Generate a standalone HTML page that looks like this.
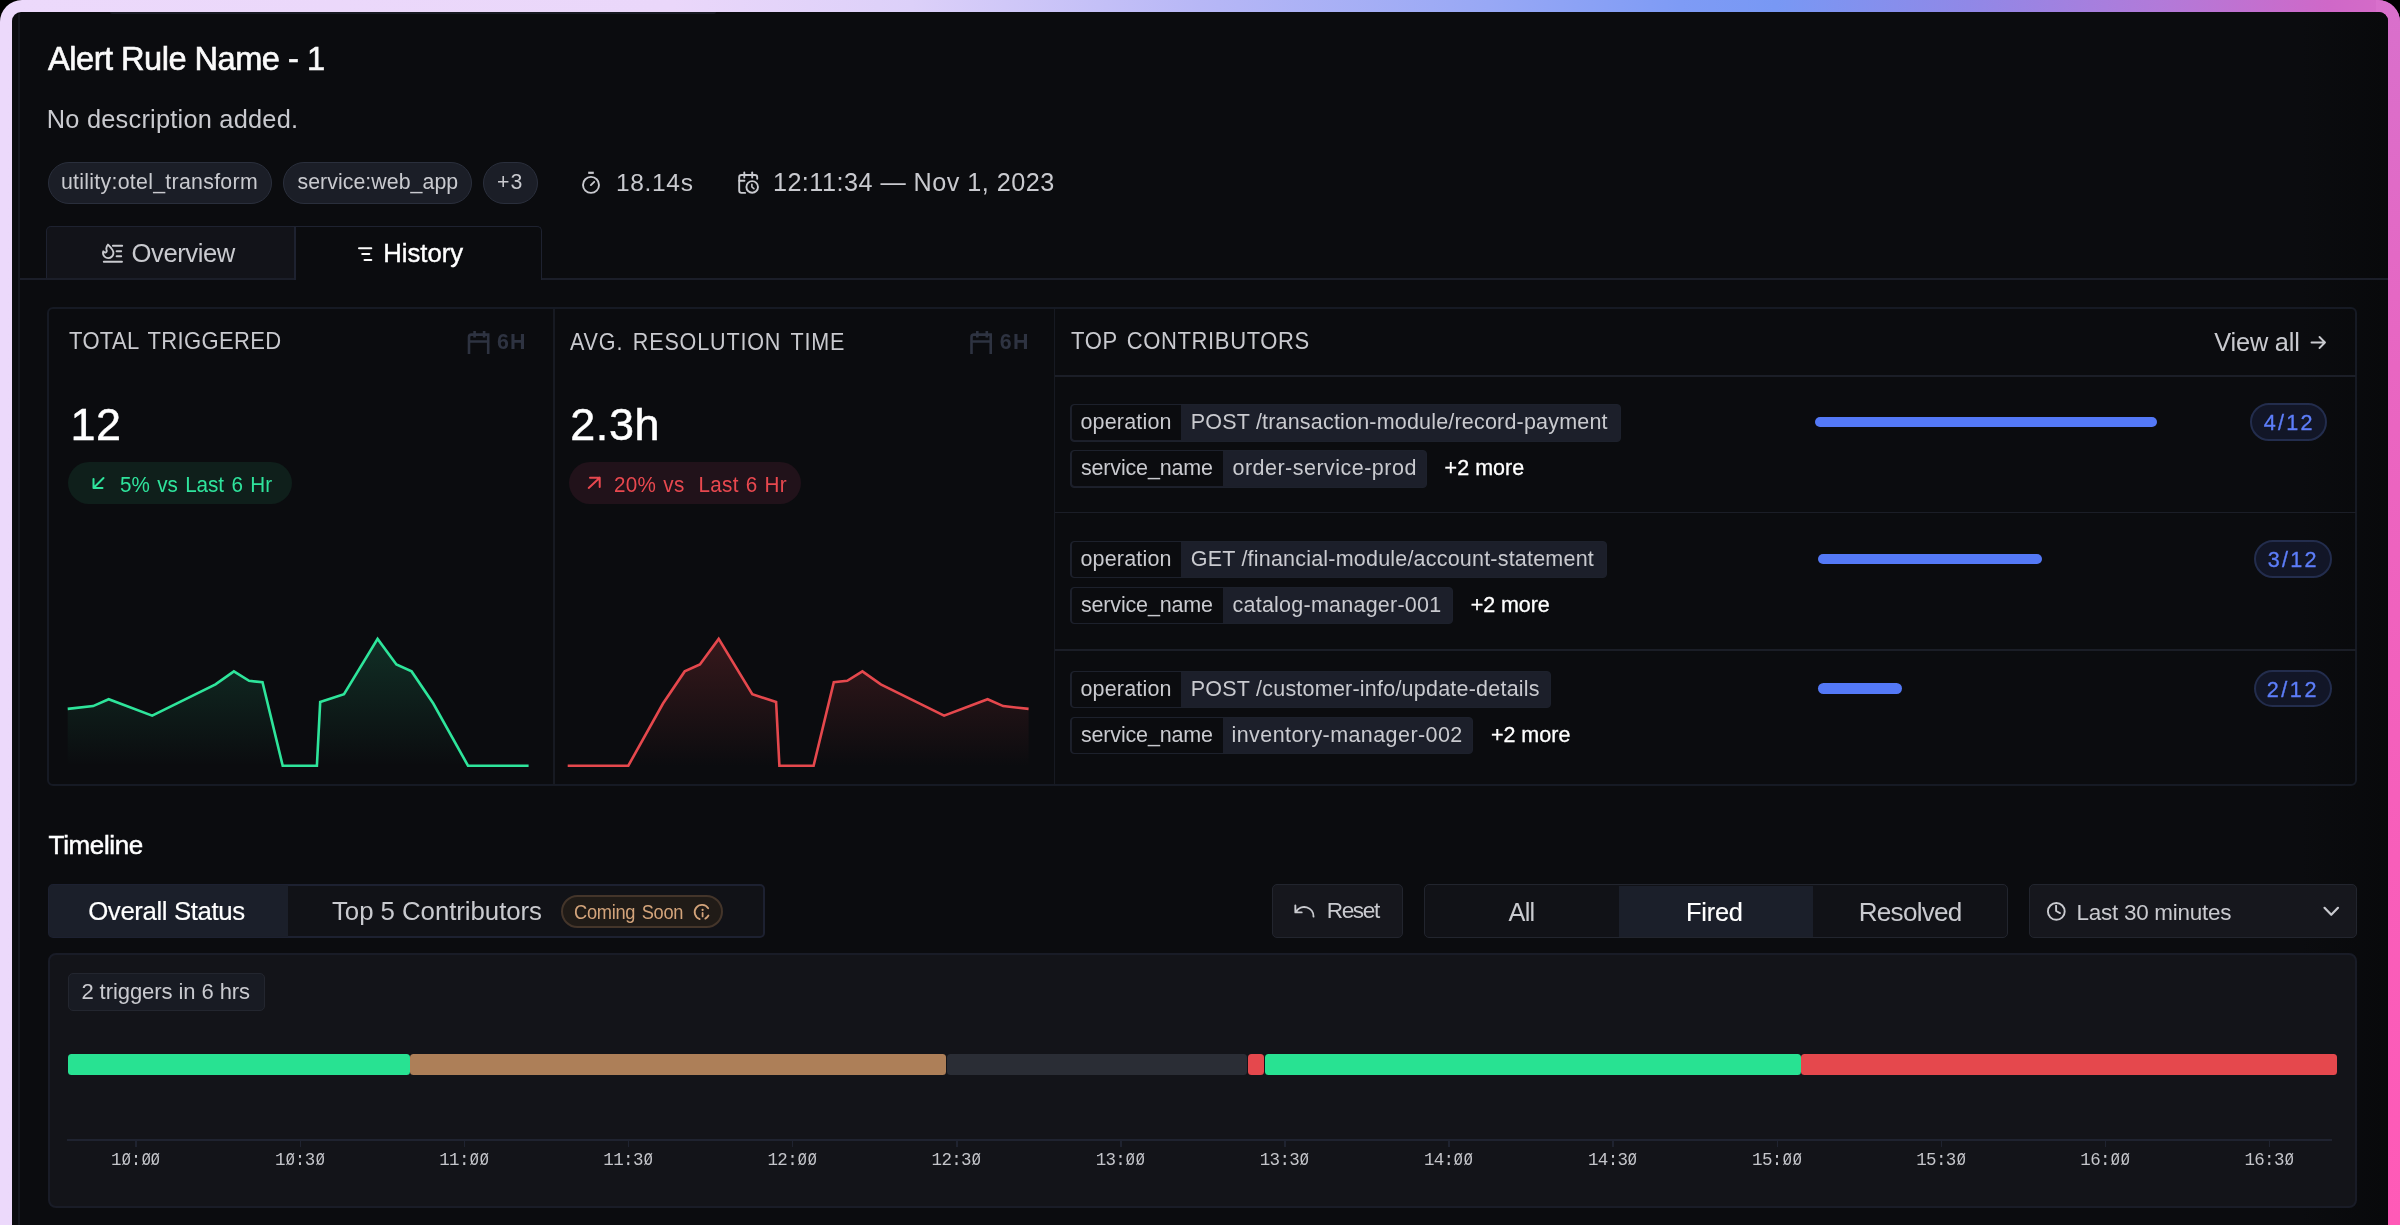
<!DOCTYPE html>
<html><head><meta charset="utf-8"><title>Alert Rule</title>
<style>
*{box-sizing:border-box;margin:0;padding:0}
html,body{width:2400px;height:1225px;overflow:hidden;background:#000}
body{font-family:"Liberation Sans",sans-serif;position:relative}
.t{position:absolute;white-space:pre;line-height:1}

.z{display:inline-block;transform:scaleX(0.86)}
#txt{position:absolute;left:0;top:0;width:2400px;height:1225px;will-change:transform}
.b{position:absolute}
svg{position:absolute;left:0;top:0;overflow:visible}
</style></head>
<body>
<div class="b" style="left:0px;top:0px;width:2400px;height:1260px;border-radius:22px;background:linear-gradient(90deg,#ecd9fb 0%,#ead7fa 28%,#dcd0f9 38%,#b7b7f6 50%,#98a8f5 62%,#7e9bf5 70%,#7898f4 74%,#9088e7 82%,#b27ad9 90%,#cf68c8 97%,#d66cc8 100%)"></div>
<div class="b" style="left:2376px;top:0px;width:24px;height:1225px;border-radius:0 22px 0 0;background:linear-gradient(180deg,#d870cc 0%,#e866c2 30%,#f85eba 70%,#ff5ab7 100%)"></div>
<div class="b" style="left:12px;top:12px;width:2376px;height:1248px;border-radius:9px;background:#0b0c0f"></div>
<div class="b" style="left:2300px;top:12px;width:88px;height:1213px;border-radius:0 9px 0 0;background:linear-gradient(90deg,rgba(11,12,15,0) 0%,rgba(8,9,11,1) 100%)"></div>
<div class="b" style="left:110px;top:12px;width:606px;height:2px;background:#181a22;border-radius:0 0 2px 2px"></div>
<div class="b" style="left:18px;top:14px;width:2px;height:1211px;background:#15171e"></div>
<div class="b" style="left:20px;top:278.3px;width:2368px;height:1.8000000000000114px;background:#1b1e29"></div>
<div class="b" style="left:45.5px;top:225.5px;width:250.5px;height:52.80000000000001px;background:#121319;border:1.5px solid #1e2230;border-bottom:none;border-radius:5px 0 0 0"></div>
<div class="b" style="left:296px;top:225.5px;width:245.5px;height:54.60000000000002px;background:#0b0c0f;border:1.5px solid #1e2230;border-left:none;border-bottom:none;border-radius:0 5px 0 0"></div>
<div class="b" style="left:294px;top:226px;width:2px;height:54px;background:#1e2230"></div>
<div class="b" style="left:47.5px;top:161.5px;width:224.8px;height:42.5px;background:#1b1e27;border:1.5px solid #2a2f3c;border-radius:22px"></div>
<div class="b" style="left:283.2px;top:161.5px;width:188.8px;height:42.5px;background:#1b1e27;border:1.5px solid #2a2f3c;border-radius:22px"></div>
<div class="b" style="left:483px;top:161.5px;width:54.799999999999955px;height:42.5px;background:#1b1e27;border:1.5px solid #2a2f3c;border-radius:22px"></div>
<div class="b" style="left:47.2px;top:307.2px;width:2310.3px;height:478.59999999999997px;border:2px solid #161a24;border-radius:6px"></div>
<div class="b" style="left:553px;top:309px;width:1.5px;height:477px;background:#171a22"></div>
<div class="b" style="left:1053.7px;top:309px;width:1.5px;height:477px;background:#171a22"></div>
<div class="b" style="left:1055px;top:375px;width:1301px;height:1.5px;background:#1b1e27"></div>
<div class="b" style="left:1055px;top:511.5px;width:1301px;height:1.5px;background:#1b1e27"></div>
<div class="b" style="left:1055px;top:649px;width:1301px;height:1.5px;background:#1b1e27"></div>
<div class="b" style="left:68px;top:462.2px;width:224px;height:41.60000000000002px;background:#0f1f1b;border-radius:21px"></div>
<div class="b" style="left:569px;top:462.3px;width:231.70000000000005px;height:41.30000000000001px;background:#21121a;border-radius:21px"></div>
<div class="b" style="left:1070px;top:403.5px;width:550.8px;height:38.30000000000001px;background:#1c1f2a;border:1.5px solid #1d212c;border-radius:4px"></div>
<div class="b" style="left:1071.5px;top:405.0px;width:109.29999999999995px;height:35.30000000000001px;background:#0b0c0f;border-radius:3px 0 0 3px"></div>
<div class="b" style="left:1070px;top:449.5px;width:357px;height:38.0px;background:#1c1f2a;border:1.5px solid #1d212c;border-radius:4px"></div>
<div class="b" style="left:1071.5px;top:451.0px;width:151.29999999999995px;height:35.0px;background:#0b0c0f;border-radius:3px 0 0 3px"></div>
<div class="b" style="left:1070px;top:540.7px;width:536.5px;height:37.69999999999993px;background:#1c1f2a;border:1.5px solid #1d212c;border-radius:4px"></div>
<div class="b" style="left:1071.5px;top:542.2px;width:109.29999999999995px;height:34.69999999999993px;background:#0b0c0f;border-radius:3px 0 0 3px"></div>
<div class="b" style="left:1070px;top:586.6px;width:382.5px;height:37.69999999999993px;background:#1c1f2a;border:1.5px solid #1d212c;border-radius:4px"></div>
<div class="b" style="left:1071.5px;top:588.1px;width:151.29999999999995px;height:34.69999999999993px;background:#0b0c0f;border-radius:3px 0 0 3px"></div>
<div class="b" style="left:1070px;top:670.5px;width:480.70000000000005px;height:37.700000000000045px;background:#1c1f2a;border:1.5px solid #1d212c;border-radius:4px"></div>
<div class="b" style="left:1071.5px;top:672.0px;width:109.29999999999995px;height:34.700000000000045px;background:#0b0c0f;border-radius:3px 0 0 3px"></div>
<div class="b" style="left:1070px;top:716.7px;width:402.5999999999999px;height:37.69999999999993px;background:#1c1f2a;border:1.5px solid #1d212c;border-radius:4px"></div>
<div class="b" style="left:1071.5px;top:718.2px;width:151.29999999999995px;height:34.69999999999993px;background:#0b0c0f;border-radius:3px 0 0 3px"></div>
<div class="b" style="left:1815px;top:416.6px;width:342.1999999999998px;height:10.799999999999955px;background:#5479f7;border-radius:6px"></div>
<div class="b" style="left:1817.5px;top:553.7px;width:224.70000000000005px;height:10.299999999999955px;background:#5479f7;border-radius:6px"></div>
<div class="b" style="left:1817.5px;top:683.4px;width:84.40000000000009px;height:10.300000000000068px;background:#5479f7;border-radius:6px"></div>
<div class="b" style="left:2249.7px;top:403.3px;width:77.10000000000036px;height:37.5px;background:#121627;border:2px solid #232d4d;border-radius:19px"></div>
<div class="b" style="left:2254px;top:540px;width:77.5px;height:37.5px;background:#121627;border:2px solid #232d4d;border-radius:19px"></div>
<div class="b" style="left:2254px;top:670px;width:77.5px;height:37.39999999999998px;background:#121627;border:2px solid #232d4d;border-radius:19px"></div>
<div class="b" style="left:47.6px;top:883.8px;width:717.4px;height:54.60000000000002px;background:#111217;border:2px solid #1d2131;border-radius:5px"></div>
<div class="b" style="left:49px;top:885.3px;width:239.10000000000002px;height:51.60000000000002px;background:#1b1f2a;border-radius:4px 0 0 4px"></div>
<div class="b" style="left:560.5px;top:895.2px;width:162.5px;height:32.5px;background:#201b17;border:2px solid #44352a;border-radius:17px"></div>
<div class="b" style="left:1272.1px;top:884px;width:130.70000000000005px;height:54.39999999999998px;background:#16171d;border:1.5px solid #22252e;border-radius:5px"></div>
<div class="b" style="left:1424px;top:884px;width:583.5px;height:54.39999999999998px;background:#111217;border:1.5px solid #22252e;border-radius:5px"></div>
<div class="b" style="left:1618.6px;top:885.5px;width:194.80000000000018px;height:51.39999999999998px;background:#1b1f2a"></div>
<div class="b" style="left:2029.25px;top:884.25px;width:327.5px;height:53.75px;background:#16171d;border:1.5px solid #22252e;border-radius:5px"></div>
<div class="b" style="left:47.6px;top:952.6px;width:2309.4px;height:255.19999999999993px;background:#131419;border:2px solid #191c27;border-radius:8px"></div>
<div class="b" style="left:68.1px;top:973.2px;width:196.6px;height:38.0px;background:#181b23;border:1.5px solid #23262f;border-radius:5px"></div>
<div class="b" style="left:68px;top:1054.1px;width:342.1px;height:20.700000000000045px;background:#28e292;border-radius:3.5px"></div>
<div class="b" style="left:410.3px;top:1054.1px;width:536.0999999999999px;height:20.700000000000045px;background:#ad7f58;border-radius:3.5px"></div>
<div class="b" style="left:946.6px;top:1054.1px;width:300.19999999999993px;height:20.700000000000045px;background:#2a2d35;border-radius:3.5px"></div>
<div class="b" style="left:1247.6px;top:1054.1px;width:16.700000000000045px;height:20.700000000000045px;background:#e5484d;border-radius:3.5px"></div>
<div class="b" style="left:1264.8px;top:1054.1px;width:535.8px;height:20.700000000000045px;background:#28e292;border-radius:3.5px"></div>
<div class="b" style="left:1800.9px;top:1054.1px;width:535.7999999999997px;height:20.700000000000045px;background:#e5484d;border-radius:3.5px"></div>
<div class="b" style="left:67px;top:1139px;width:2265px;height:1.5px;background:#1f2330"></div>
<div class="b" style="left:135.45px;top:1140px;width:1.5px;height:7px;background:#1f2330"></div>
<div class="b" style="left:299.56px;top:1140px;width:1.5px;height:7px;background:#1f2330"></div>
<div class="b" style="left:463.67px;top:1140px;width:1.5px;height:7px;background:#1f2330"></div>
<div class="b" style="left:627.78px;top:1140px;width:1.5px;height:7px;background:#1f2330"></div>
<div class="b" style="left:791.8900000000001px;top:1140px;width:1.5px;height:7px;background:#1f2330"></div>
<div class="b" style="left:956.0px;top:1140px;width:1.5px;height:7px;background:#1f2330"></div>
<div class="b" style="left:1120.1100000000001px;top:1140px;width:1.5px;height:7px;background:#1f2330"></div>
<div class="b" style="left:1284.22px;top:1140px;width:1.5px;height:7px;background:#1f2330"></div>
<div class="b" style="left:1448.3300000000002px;top:1140px;width:1.5px;height:7px;background:#1f2330"></div>
<div class="b" style="left:1612.4400000000003px;top:1140px;width:1.5px;height:7px;background:#1f2330"></div>
<div class="b" style="left:1776.5500000000002px;top:1140px;width:1.5px;height:7px;background:#1f2330"></div>
<div class="b" style="left:1940.66px;top:1140px;width:1.5px;height:7px;background:#1f2330"></div>
<div class="b" style="left:2104.77px;top:1140px;width:1.5px;height:7px;background:#1f2330"></div>
<div class="b" style="left:2268.88px;top:1140px;width:1.5px;height:7px;background:#1f2330"></div>
<svg width="2400" height="1225" viewBox="0 0 2400 1225">
<defs>
<linearGradient id="gg" x1="0" y1="0" x2="0" y2="1" gradientUnits="objectBoundingBox"><stop offset="0" stop-color="#2ee59b" stop-opacity="0.16"/><stop offset="1" stop-color="#2ee59b" stop-opacity="0"/></linearGradient>
<linearGradient id="rg" x1="0" y1="0" x2="0" y2="1"><stop offset="0" stop-color="#e5484d" stop-opacity="0.2"/><stop offset="1" stop-color="#e5484d" stop-opacity="0"/></linearGradient>
</defs>
<polygon points="67.7,708.9 93.1,706.1 108.7,699.2 152.2,715.6 215.5,684.4 233.9,671.4 249.1,680.8 262.5,682.3 282.7,765.7 316.9,765.7 320.2,702.0 344.0,694.2 377.6,638.9 396.4,664.5 411.6,671.4 433.3,703.5 468.0,765.7 528.6,765.7 528.6,766 67.7,766" fill="url(#gg)"/>
<polyline points="67.7,708.9 93.1,706.1 108.7,699.2 152.2,715.6 215.5,684.4 233.9,671.4 249.1,680.8 262.5,682.3 282.7,765.7 316.9,765.7 320.2,702.0 344.0,694.2 377.6,638.9 396.4,664.5 411.6,671.4 433.3,703.5 468.0,765.7 528.6,765.7" fill="none" stroke="#2ee59b" stroke-width="2.6" stroke-linejoin="miter"/>
<polygon points="567.7,765.7 628.3,765.7 663.0,703.5 684.7,671.4 699.9,664.5 718.7,638.9 752.3,694.2 776.1,702.0 779.4,765.7 813.6,765.7 833.8,682.3 847.2,680.8 862.4,671.4 880.8,684.4 944.1,715.6 987.6,699.2 1003.2,706.1 1028.6,708.9 1028.6,766 567.7,766" fill="url(#rg)"/>
<polyline points="567.7,765.7 628.3,765.7 663.0,703.5 684.7,671.4 699.9,664.5 718.7,638.9 752.3,694.2 776.1,702.0 779.4,765.7 813.6,765.7 833.8,682.3 847.2,680.8 862.4,671.4 880.8,684.4 944.1,715.6 987.6,699.2 1003.2,706.1 1028.6,708.9" fill="none" stroke="#e5484d" stroke-width="2.6" stroke-linejoin="miter"/>
<g fill="none" stroke="#c9cacf" stroke-width="1.9" stroke-linecap="round" stroke-linejoin="round">
 <!-- timer -->
 <line x1="588.2" y1="172.8" x2="593.8" y2="172.8" stroke-width="2.2" stroke-linecap="butt"/>
 <circle cx="591" cy="184.9" r="8"/>
 <line x1="590.9" y1="185.1" x2="594.2" y2="181.8"/>
 <!-- calendar clock -->
 <path d="M745.1 192.9 H741.5 Q739.2 192.9 739.2 190.6 V177.3 Q739.2 175 741.5 175 H754.9 Q757.2 175 757.2 177.3 V178.8"/>
 <line x1="739.2" y1="180.8" x2="744.5" y2="180.8"/>
 <line x1="744.3" y1="172.5" x2="744.3" y2="177.5"/>
 <line x1="752.2" y1="172.5" x2="752.2" y2="177.5"/>
 <circle cx="752.2" cy="186.9" r="5.8"/>
 <path d="M751.9 184.3 V187 L753.9 188.7" stroke-width="1.6"/>
 <!-- overview icon -->
 <path d="M108 244.6 C110 246.8 113.4 249.5 113.4 252.8 A5.2 5.2 0 0 1 103 253 C103 252.3 103.1 251.8 103.3 251.3 C104 252.3 105 252.7 105.9 252.4 C106.8 252 106.9 250.8 106.5 249.6 C106.1 248.2 106.6 246.2 108 244.6 Z" stroke-width="1.9"/>
 <line x1="112.9" y1="245.8" x2="122.2" y2="245.8"/>
 <line x1="116.6" y1="251.3" x2="121.2" y2="251.3"/>
 <line x1="116.6" y1="256.2" x2="121.2" y2="256.2"/>
 <line x1="103.8" y1="261.75" x2="122" y2="261.75"/>
 <!-- view all arrow -->
 <path d="M2311.5 342.5 H2325 M2319.5 337 L2325 342.5 L2319.5 348"/>
 <!-- reset -->
 <path d="M1295.35 905.5 V912.4 H1301.7 M1296.2 911.6 A9.3 9.3 0 0 1 1313.5 916.6"/>
 <!-- clock -->
 <circle cx="2056.3" cy="911.4" r="8.4"/>
 <path d="M2056.1 905.6 V911 L2060 913.1"/>
 <!-- chevron -->
 <path d="M2324.5 907.8 L2331.25 914.8 L2338 907.8" stroke-width="2.2"/>
</g>
<g fill="none" stroke="#fafafa" stroke-width="2" stroke-linecap="round">
 <!-- history icon -->
 <line x1="359" y1="248.2" x2="371.3" y2="248.2"/>
 <line x1="362.2" y1="254.1" x2="369.3" y2="254.1"/>
 <line x1="364.5" y1="260" x2="371.3" y2="260"/>
</g>
<g fill="none" stroke="#2fe39c" stroke-width="2" stroke-linecap="round" stroke-linejoin="round">
 <path d="M103.5 478 L93.5 488 M93.5 479 V488 H102.5"/>
</g>
<g fill="none" stroke="#e8484f" stroke-width="2" stroke-linecap="round" stroke-linejoin="round">
 <path d="M588.7 487.9 L599.7 477.7 M590 477.7 H599.7 V487"/>
</g>
<g fill="none" stroke="#2e3341" stroke-width="2.6" stroke-linecap="butt">
 <path d="M469 354 V337 Q469 334.6 471.4 334.6 H488.2 V354 M469 341.5 H488.2 M474.6 331 V337.5 M484.1 331 V337.5"/>
 <path d="M971.5 354 V337 Q971.5 334.6 973.9 334.6 H990.7 V354 M971.5 341.5 H990.7 M977.3 331 V337.5 M986.8 331 V337.5"/>
</g>
<g fill="none" stroke="#d3a47b" stroke-width="1.8" stroke-linecap="round">
 <path d="M708.19 908.23 A7.3 7.3 0 1 0 699.74 919.04"/>
 <path d="M708.44 915.53 A7.3 7.3 0 0 1 705.31 918.6"/>
 <line x1="702.6" y1="913" x2="702.6" y2="916.4"/>
</g>
<circle cx="702.6" cy="909.9" r="1.1" fill="#d3a47b"/>
</svg>
<div id="txt">
<div class="t" style="left:48.10px;top:43.20px;font-size:32.61px;letter-spacing:-0.523px;color:#fafafa;font-family:'Liberation Sans';-webkit-text-stroke:0.6px #fafafa;">Alert Rule Name - 1</div>
<div class="t" style="left:46.75px;top:106.82px;font-size:25.36px;letter-spacing:0.229px;color:#c9cacf;font-family:'Liberation Sans';">No description added.</div>
<div class="t" style="left:60.90px;top:172.15px;font-size:21.30px;letter-spacing:0.294px;color:#c9cacf;font-family:'Liberation Sans';">utility:otel_transform</div>
<div class="t" style="left:297.50px;top:172.15px;font-size:21.30px;letter-spacing:0.059px;color:#c9cacf;font-family:'Liberation Sans';">service:web_app</div>
<div class="t" style="left:496.90px;top:172.25px;font-size:21.30px;letter-spacing:1.163px;color:#c9cacf;font-family:'Liberation Sans';">+3</div>
<div class="t" style="left:615.90px;top:171.35px;font-size:24.49px;letter-spacing:0.706px;color:#c9cacf;font-family:'Liberation Sans';">18.14s</div>
<div class="t" style="left:772.90px;top:170.29px;font-size:25.22px;letter-spacing:0.465px;color:#c9cacf;font-family:'Liberation Sans';">12:11:34 — Nov 1, 2023</div>
<div class="t" style="left:131.60px;top:241.17px;font-size:25.65px;letter-spacing:-0.463px;color:#c9cacf;font-family:'Liberation Sans';">Overview</div>
<div class="t" style="left:383.30px;top:241.17px;font-size:25.65px;letter-spacing:-0.009px;color:#ffffff;font-family:'Liberation Sans';-webkit-text-stroke:0.4px #ffffff;">History</div>
<div class="t" style="left:69.00px;top:330.25px;font-size:23.70px;letter-spacing:0.342px;color:#c9cacf;font-family:'Liberation Sans';transform:scale(0.93,1.0);transform-origin:0 19.85px;word-spacing:3px;">TOTAL TRIGGERED</div>
<div class="t" style="left:497.00px;top:332.31px;font-size:21.38px;letter-spacing:1.121px;color:#2e3341;font-family:'Liberation Sans';font-weight:bold;">6H</div>
<div class="t" style="left:70.50px;top:403.04px;font-size:44.93px;letter-spacing:0.525px;color:#ffffff;font-family:'Liberation Sans';-webkit-text-stroke:0.5px #ffffff;">12</div>
<div class="t" style="left:119.50px;top:473.77px;font-size:22.46px;letter-spacing:-0.088px;color:#2fe39c;font-family:'Liberation Sans';transform:scale(0.92,1.0);transform-origin:0 18.73px;word-spacing:2px;">5% vs Last 6 Hr</div>
<div class="t" style="left:569.80px;top:330.81px;font-size:23.19px;letter-spacing:0.883px;color:#c9cacf;font-family:'Liberation Sans';transform:scale(0.93,1.0);transform-origin:0 19.59px;word-spacing:3px;">AVG. RESOLUTION TIME</div>
<div class="t" style="left:999.75px;top:332.31px;font-size:21.38px;letter-spacing:1.371px;color:#2e3341;font-family:'Liberation Sans';font-weight:bold;">6H</div>
<div class="t" style="left:570.20px;top:403.04px;font-size:44.93px;letter-spacing:0.658px;color:#ffffff;font-family:'Liberation Sans';-webkit-text-stroke:0.5px #ffffff;">2.3h</div>
<div class="t" style="left:613.78px;top:473.67px;font-size:22.46px;letter-spacing:0.341px;color:#e8484f;font-family:'Liberation Sans';transform:scale(0.92,1.0);transform-origin:0 18.73px;word-spacing:1px;">20% vs  Last 6 Hr</div>
<div class="t" style="left:1070.60px;top:330.25px;font-size:23.70px;letter-spacing:0.646px;color:#c9cacf;font-family:'Liberation Sans';transform:scale(0.93,1.0);transform-origin:0 19.85px;word-spacing:3px;">TOP CONTRIBUTORS</div>
<div class="t" style="left:2214.30px;top:330.12px;font-size:25.36px;letter-spacing:-0.199px;color:#c9cacf;font-family:'Liberation Sans';">View all</div>
<div class="t" style="left:1080.50px;top:412.25px;font-size:21.50px;letter-spacing:0.163px;color:#c9cacf;font-family:'Liberation Sans';">operation</div>
<div class="t" style="left:1190.80px;top:412.25px;font-size:21.50px;letter-spacing:0.192px;color:#c9cacf;font-family:'Liberation Sans';">POST /transaction-module/record-payment</div>
<div class="t" style="left:1081.00px;top:458.25px;font-size:21.50px;letter-spacing:-0.171px;color:#c9cacf;font-family:'Liberation Sans';">service_name</div>
<div class="t" style="left:1232.50px;top:458.25px;font-size:21.50px;letter-spacing:0.483px;color:#c9cacf;font-family:'Liberation Sans';">order-service-prod</div>
<div class="t" style="left:1444.60px;top:458.25px;font-size:21.50px;letter-spacing:0.015px;color:#ffffff;font-family:'Liberation Sans';-webkit-text-stroke:0.3px #ffffff;">+2 more</div>
<div class="t" style="left:1080.50px;top:549.45px;font-size:21.50px;letter-spacing:0.163px;color:#c9cacf;font-family:'Liberation Sans';">operation</div>
<div class="t" style="left:1190.80px;top:549.45px;font-size:21.50px;letter-spacing:0.206px;color:#c9cacf;font-family:'Liberation Sans';">GET /financial-module/account-statement</div>
<div class="t" style="left:1081.00px;top:595.35px;font-size:21.50px;letter-spacing:-0.171px;color:#c9cacf;font-family:'Liberation Sans';">service_name</div>
<div class="t" style="left:1232.50px;top:595.35px;font-size:21.50px;letter-spacing:0.238px;color:#c9cacf;font-family:'Liberation Sans';">catalog-manager-001</div>
<div class="t" style="left:1470.80px;top:595.35px;font-size:21.50px;letter-spacing:-0.085px;color:#ffffff;font-family:'Liberation Sans';-webkit-text-stroke:0.3px #ffffff;">+2 more</div>
<div class="t" style="left:1080.50px;top:679.25px;font-size:21.50px;letter-spacing:0.163px;color:#c9cacf;font-family:'Liberation Sans';">operation</div>
<div class="t" style="left:1190.80px;top:679.25px;font-size:21.50px;letter-spacing:0.224px;color:#c9cacf;font-family:'Liberation Sans';">POST /customer-info/update-details</div>
<div class="t" style="left:1081.00px;top:725.45px;font-size:21.50px;letter-spacing:-0.171px;color:#c9cacf;font-family:'Liberation Sans';">service_name</div>
<div class="t" style="left:1231.50px;top:725.45px;font-size:21.50px;letter-spacing:0.424px;color:#c9cacf;font-family:'Liberation Sans';">inventory-manager-002</div>
<div class="t" style="left:1490.90px;top:725.45px;font-size:21.50px;letter-spacing:-0.002px;color:#ffffff;font-family:'Liberation Sans';-webkit-text-stroke:0.3px #ffffff;">+2 more</div>
<div class="t" style="left:2263.70px;top:412.00px;font-size:21.59px;letter-spacing:2.234px;color:#5d7ef9;font-family:'Liberation Sans';-webkit-text-stroke:0.35px #5d7ef9;">4/12</div>
<div class="t" style="left:2267.70px;top:548.70px;font-size:21.59px;letter-spacing:2.234px;color:#5d7ef9;font-family:'Liberation Sans';-webkit-text-stroke:0.35px #5d7ef9;">3/12</div>
<div class="t" style="left:2266.70px;top:678.70px;font-size:21.59px;letter-spacing:2.568px;color:#5d7ef9;font-family:'Liberation Sans';-webkit-text-stroke:0.35px #5d7ef9;">2/12</div>
<div class="t" style="left:48.60px;top:832.63px;font-size:25.94px;letter-spacing:-0.346px;color:#ffffff;font-family:'Liberation Sans';-webkit-text-stroke:0.5px #ffffff;">Timeline</div>
<div class="t" style="left:88.20px;top:899.30px;font-size:25.80px;letter-spacing:-0.386px;color:#ffffff;font-family:'Liberation Sans';-webkit-text-stroke:0.15px #ffffff;">Overall Status</div>
<div class="t" style="left:332.00px;top:899.30px;font-size:25.80px;letter-spacing:-0.045px;color:#c9cacf;font-family:'Liberation Sans';">Top 5 Contributors</div>
<div class="t" style="left:574.10px;top:902.46px;font-size:20.29px;letter-spacing:-0.330px;color:#d3a47b;font-family:'Liberation Sans';transform:scale(0.9,1.0);transform-origin:0 17.14px;word-spacing:2px;">Coming Soon</div>
<div class="t" style="left:81.40px;top:980.69px;font-size:22.03px;letter-spacing:-0.076px;color:#c9cacf;font-family:'Liberation Sans';">2 triggers in 6 hrs</div>
<div class="t" style="left:1326.70px;top:900.00px;font-size:22.61px;letter-spacing:-1.386px;color:#c9cacf;font-family:'Liberation Sans';">Reset</div>
<div class="t" style="left:1508.50px;top:899.52px;font-size:25.36px;letter-spacing:-0.774px;color:#c9cacf;font-family:'Liberation Sans';">All</div>
<div class="t" style="left:1686.10px;top:899.52px;font-size:25.36px;letter-spacing:-0.243px;color:#ffffff;font-family:'Liberation Sans';-webkit-text-stroke:0.15px #ffffff;">Fired</div>
<div class="t" style="left:1858.75px;top:899.46px;font-size:26.09px;letter-spacing:-0.745px;color:#c9cacf;font-family:'Liberation Sans';">Resolved</div>
<div class="t" style="left:2076.50px;top:902.27px;font-size:22.46px;letter-spacing:-0.252px;color:#c9cacf;font-family:'Liberation Sans';">Last 30 minutes</div>
<div class="t" style="left:111.00px;top:1152.25px;font-size:17.50px;letter-spacing:-0.652px;color:#c4c5ca;font-family:'Liberation Mono';transform:scale(1.0,1.08);transform-origin:0 13.75px;">1<span class="z">Ø</span>:<span class="z">Ø</span><span class="z">Ø</span></div>
<div class="t" style="left:275.11px;top:1152.25px;font-size:17.50px;letter-spacing:-0.652px;color:#c4c5ca;font-family:'Liberation Mono';transform:scale(1.0,1.08);transform-origin:0 13.75px;">1<span class="z">Ø</span>:3<span class="z">Ø</span></div>
<div class="t" style="left:439.22px;top:1152.25px;font-size:17.50px;letter-spacing:-0.652px;color:#c4c5ca;font-family:'Liberation Mono';transform:scale(1.0,1.08);transform-origin:0 13.75px;">11:<span class="z">Ø</span><span class="z">Ø</span></div>
<div class="t" style="left:603.33px;top:1152.25px;font-size:17.50px;letter-spacing:-0.652px;color:#c4c5ca;font-family:'Liberation Mono';transform:scale(1.0,1.08);transform-origin:0 13.75px;">11:3<span class="z">Ø</span></div>
<div class="t" style="left:767.44px;top:1152.25px;font-size:17.50px;letter-spacing:-0.652px;color:#c4c5ca;font-family:'Liberation Mono';transform:scale(1.0,1.08);transform-origin:0 13.75px;">12:<span class="z">Ø</span><span class="z">Ø</span></div>
<div class="t" style="left:931.55px;top:1152.25px;font-size:17.50px;letter-spacing:-0.652px;color:#c4c5ca;font-family:'Liberation Mono';transform:scale(1.0,1.08);transform-origin:0 13.75px;">12:3<span class="z">Ø</span></div>
<div class="t" style="left:1095.66px;top:1152.25px;font-size:17.50px;letter-spacing:-0.652px;color:#c4c5ca;font-family:'Liberation Mono';transform:scale(1.0,1.08);transform-origin:0 13.75px;">13:<span class="z">Ø</span><span class="z">Ø</span></div>
<div class="t" style="left:1259.77px;top:1152.25px;font-size:17.50px;letter-spacing:-0.652px;color:#c4c5ca;font-family:'Liberation Mono';transform:scale(1.0,1.08);transform-origin:0 13.75px;">13:3<span class="z">Ø</span></div>
<div class="t" style="left:1423.88px;top:1152.25px;font-size:17.50px;letter-spacing:-0.652px;color:#c4c5ca;font-family:'Liberation Mono';transform:scale(1.0,1.08);transform-origin:0 13.75px;">14:<span class="z">Ø</span><span class="z">Ø</span></div>
<div class="t" style="left:1587.99px;top:1152.25px;font-size:17.50px;letter-spacing:-0.652px;color:#c4c5ca;font-family:'Liberation Mono';transform:scale(1.0,1.08);transform-origin:0 13.75px;">14:3<span class="z">Ø</span></div>
<div class="t" style="left:1752.10px;top:1152.25px;font-size:17.50px;letter-spacing:-0.652px;color:#c4c5ca;font-family:'Liberation Mono';transform:scale(1.0,1.08);transform-origin:0 13.75px;">15:<span class="z">Ø</span><span class="z">Ø</span></div>
<div class="t" style="left:1916.21px;top:1152.25px;font-size:17.50px;letter-spacing:-0.652px;color:#c4c5ca;font-family:'Liberation Mono';transform:scale(1.0,1.08);transform-origin:0 13.75px;">15:3<span class="z">Ø</span></div>
<div class="t" style="left:2080.32px;top:1152.25px;font-size:17.50px;letter-spacing:-0.652px;color:#c4c5ca;font-family:'Liberation Mono';transform:scale(1.0,1.08);transform-origin:0 13.75px;">16:<span class="z">Ø</span><span class="z">Ø</span></div>
<div class="t" style="left:2244.43px;top:1152.25px;font-size:17.50px;letter-spacing:-0.652px;color:#c4c5ca;font-family:'Liberation Mono';transform:scale(1.0,1.08);transform-origin:0 13.75px;">16:3<span class="z">Ø</span></div>
</div>
</body></html>
